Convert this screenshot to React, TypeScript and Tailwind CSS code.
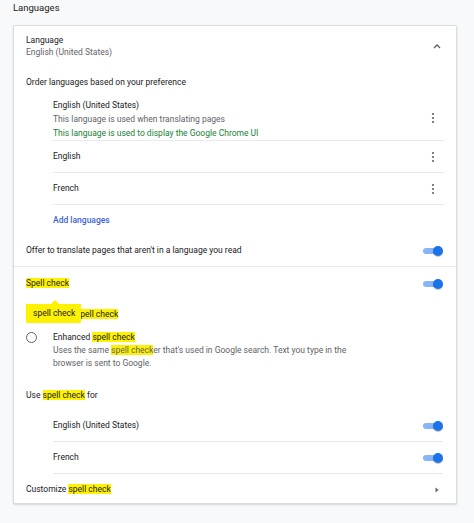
import React from 'react';

const Hl = ({ children }: { children: React.ReactNode }) => (
  <span className="bg-[#fff200]">{children}</span>
);

const Toggle = () => (
  <div className="relative w-[20px] h-[10px] flex items-center">
    <div className="w-[18px] h-[6px] rounded-full bg-[#8ab4f8]" />
    <div className="absolute right-0 top-0 w-[10px] h-[10px] rounded-full bg-[#1a73e8] shadow-[0_1px_1px_rgba(0,0,0,0.25)]" />
  </div>
);

const Dots = () => (
  <svg width="4" height="12" viewBox="0 0 4 12" className="mr-[9px]">
    <circle cx="2" cy="2" r="1.1" fill="#5f6368" />
    <circle cx="2" cy="6" r="1.1" fill="#5f6368" />
    <circle cx="2" cy="10" r="1.1" fill="#5f6368" />
  </svg>
);

export default function App() {
  return (
    <div
      className="w-[474px] h-[523px] bg-[#f8f9fa] text-[8.5px] text-[#202124] overflow-hidden"
      style={{ fontFamily: 'Roboto, "Liberation Sans", sans-serif' }}
    >
      <div className="h-[25px] pl-[13px] pt-[2px] text-[9.5px] leading-[12px] text-[#202124]">Languages</div>

      <div className="ml-[13px] w-[444px] h-[479px] bg-white rounded-[2px] border border-[#dadce0] shadow-[0_1px_2px_rgba(60,64,67,0.2)]">
        {/* Language header */}
        <div className="flex items-start justify-between pl-[12px] pr-[15px] h-[42px] pt-[8px]">
          <div className="leading-[12px]">
            <div>Language</div>
            <div className="text-[#5f6368]">English (United States)</div>
          </div>
          <svg width="8" height="6" viewBox="0 0 8 6" className="mt-[9px]">
            <path d="M1 5 L4 2 L7 5" stroke="#5f6368" strokeWidth="1.4" fill="none" />
          </svg>
        </div>

        <div className="h-[28px] pl-[12px] flex items-center">Order languages based on your preference</div>

        <div className="ml-[39px] mr-[12px]">
          <div className="flex items-center justify-between h-[45px] border-b border-[#e8eaed]">
            <div className="leading-[14px] pt-[1px]">
              <div>English (United States)</div>
              <div className="text-[#5f6368]">This language is used when translating pages</div>
              <div className="text-[#188038]">This language is used to display the Google Chrome UI</div>
            </div>
            <Dots />
          </div>
          <div className="flex items-center justify-between h-[32px] border-b border-[#e8eaed]">
            <div>English</div>
            <Dots />
          </div>
          <div className="flex items-center justify-between h-[32px] border-b border-[#e8eaed]">
            <div>French</div>
            <Dots />
          </div>
          <div className="flex items-center h-[30px] text-[#3c63d6] font-medium">Add languages</div>
        </div>

        <div className="flex items-center justify-between h-[32px] pl-[12px] pr-[13px] border-b border-[#e8eaed]">
          <div>Offer to translate pages that aren't in a language you read</div>
          <Toggle />
        </div>

        <div className="flex items-center justify-between h-[33px] pl-[12px] pr-[13px]">
          <div>
            <Hl>Spell check</Hl>
          </div>
          <Toggle />
        </div>

        {/* Basic spell check option, partly hidden by the find tooltip */}
        <div className="relative h-[28px] pl-[12px] flex items-center">
          <div className="w-[11px] h-[11px] rounded-full border-[1.5px] border-[#1a73e8] flex items-center justify-center mr-[16px] shrink-0">
            <div className="w-[5px] h-[5px] rounded-full bg-[#1a73e8]" />
          </div>
          <div>
            Basic <Hl>spell check</Hl>
          </div>
          <div className="absolute left-[12px] top-[4px] h-[19px] w-[55px] bg-[#fff200] flex items-center pl-[7px] text-[8.5px]">
            spell check
          </div>
          <div className="absolute left-[37px] top-[0px] w-0 h-0 border-l-[4px] border-r-[4px] border-b-[4px] border-l-transparent border-r-transparent border-b-[#fff200]" />
        </div>

        <div className="flex pl-[12px] pt-[3px] h-[52px]">
          <div className="w-[11px] h-[11px] rounded-full border-[1.5px] border-[#5f6368] mt-[1px] mr-[16px] shrink-0" />
          <div className="leading-[13px] pr-[100px]">
            <div>
              Enhanced <Hl>spell check</Hl>
            </div>
            <div className="text-[#5f6368]">
              Uses the same <Hl>spell check</Hl>er that's used in Google search. Text you type in the browser is sent to Google.
            </div>
          </div>
        </div>

        <div className="h-[30px] pl-[12px] flex items-center">
          <div>
            Use <Hl>spell check</Hl> for
          </div>
        </div>

        <div className="ml-[39px] mr-[13px]">
          <div className="flex items-center justify-between h-[32px] border-b border-[#e8eaed]">
            <div>English (United States)</div>
            <Toggle />
          </div>
          <div className="flex items-center justify-between h-[32px] border-b border-[#e8eaed]">
            <div>French</div>
            <Toggle />
          </div>
        </div>

        <div className="flex items-center justify-between h-[31px] pl-[12px] pr-[17px]">
          <div>
            Customize <Hl>spell check</Hl>
          </div>
          <svg width="4" height="6" viewBox="0 0 4 6">
            <path d="M0.5 0.5 L3.5 3 L0.5 5.5 Z" fill="#5f6368" />
          </svg>
        </div>
      </div>
    </div>
  );
}
